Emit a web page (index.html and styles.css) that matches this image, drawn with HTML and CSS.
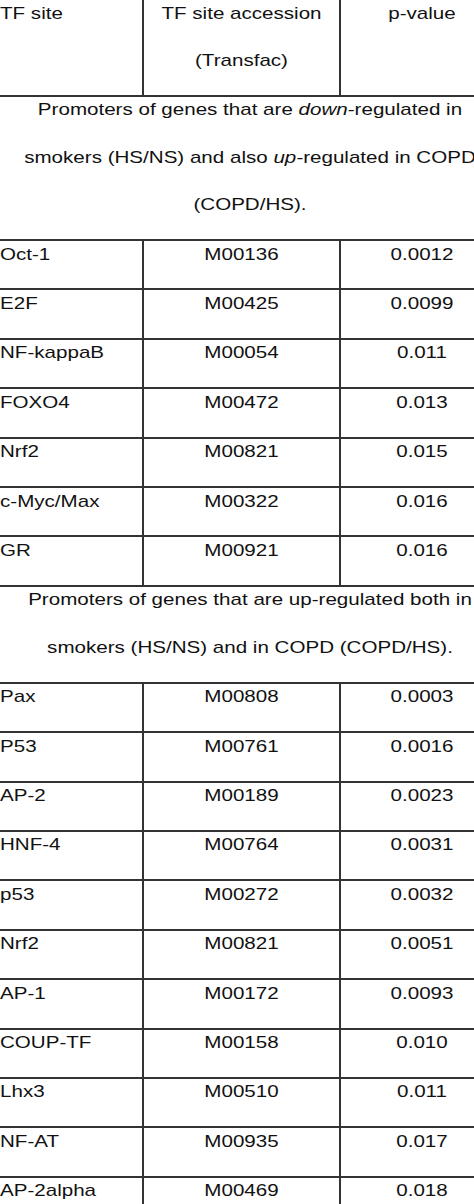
FILE: index.html
```html
<!DOCTYPE html>
<html>
<head>
<meta charset="utf-8">
<link rel="stylesheet" href="styles.css">
</head>
<body>
<div class="table">
  <div class="row">
    <div class="cell c1"><div class="t">TF site</div></div>
    <div class="cell c2"><div class="t">TF site accession<br>(Transfac)</div></div>
    <div class="cell c3"><div class="t">p-value</div></div>
  </div>
  <div class="row section">
    <div class="cell full"><div class="t">Promoters of genes that are <i>down</i>-regulated in<br>smokers (HS/NS) and also <i>up-</i>regulated in COPD<br>(COPD/HS).</div></div>
  </div>
  <div class="row"><div class="cell c1"><div class="t">Oct-1</div></div><div class="cell c2"><div class="t">M00136</div></div><div class="cell c3"><div class="t">0.0012</div></div></div>
  <div class="row"><div class="cell c1"><div class="t">E2F</div></div><div class="cell c2"><div class="t">M00425</div></div><div class="cell c3"><div class="t">0.0099</div></div></div>
  <div class="row"><div class="cell c1"><div class="t">NF-kappaB</div></div><div class="cell c2"><div class="t">M00054</div></div><div class="cell c3"><div class="t">0.011</div></div></div>
  <div class="row"><div class="cell c1"><div class="t">FOXO4</div></div><div class="cell c2"><div class="t">M00472</div></div><div class="cell c3"><div class="t">0.013</div></div></div>
  <div class="row"><div class="cell c1"><div class="t">Nrf2</div></div><div class="cell c2"><div class="t">M00821</div></div><div class="cell c3"><div class="t">0.015</div></div></div>
  <div class="row"><div class="cell c1"><div class="t">c-Myc/Max</div></div><div class="cell c2"><div class="t">M00322</div></div><div class="cell c3"><div class="t">0.016</div></div></div>
  <div class="row"><div class="cell c1"><div class="t">GR</div></div><div class="cell c2"><div class="t">M00921</div></div><div class="cell c3"><div class="t">0.016</div></div></div>
  <div class="row section">
    <div class="cell full"><div class="t">Promoters of genes that are up-regulated both in<br>smokers (HS/NS) and in COPD (COPD/HS).</div></div>
  </div>
  <div class="row"><div class="cell c1"><div class="t">Pax</div></div><div class="cell c2"><div class="t">M00808</div></div><div class="cell c3"><div class="t">0.0003</div></div></div>
  <div class="row"><div class="cell c1"><div class="t">P53</div></div><div class="cell c2"><div class="t">M00761</div></div><div class="cell c3"><div class="t">0.0016</div></div></div>
  <div class="row"><div class="cell c1"><div class="t">AP-2</div></div><div class="cell c2"><div class="t">M00189</div></div><div class="cell c3"><div class="t">0.0023</div></div></div>
  <div class="row"><div class="cell c1"><div class="t">HNF-4</div></div><div class="cell c2"><div class="t">M00764</div></div><div class="cell c3"><div class="t">0.0031</div></div></div>
  <div class="row"><div class="cell c1"><div class="t">p53</div></div><div class="cell c2"><div class="t">M00272</div></div><div class="cell c3"><div class="t">0.0032</div></div></div>
  <div class="row"><div class="cell c1"><div class="t">Nrf2</div></div><div class="cell c2"><div class="t">M00821</div></div><div class="cell c3"><div class="t">0.0051</div></div></div>
  <div class="row"><div class="cell c1"><div class="t">AP-1</div></div><div class="cell c2"><div class="t">M00172</div></div><div class="cell c3"><div class="t">0.0093</div></div></div>
  <div class="row"><div class="cell c1"><div class="t">COUP-TF</div></div><div class="cell c2"><div class="t">M00158</div></div><div class="cell c3"><div class="t">0.010</div></div></div>
  <div class="row"><div class="cell c1"><div class="t">Lhx3</div></div><div class="cell c2"><div class="t">M00510</div></div><div class="cell c3"><div class="t">0.011</div></div></div>
  <div class="row"><div class="cell c1"><div class="t">NF-AT</div></div><div class="cell c2"><div class="t">M00935</div></div><div class="cell c3"><div class="t">0.017</div></div></div>
  <div class="row"><div class="cell c1"><div class="t">AP-2alpha</div></div><div class="cell c2"><div class="t">M00469</div></div><div class="cell c3"><div class="t">0.018</div></div></div>
</div>
</body>
</html>
```
FILE: styles.css
```css
html, body {
  margin: 0;
  padding: 0;
  overflow: hidden;
  background: #ffffff;
}
body {
  font-family: "Liberation Sans", Arial, sans-serif;
  font-size: 17px;
  color: #111111;
}
.table {
  width: 506px;
  margin-left: -3px;
}
.row {
  display: grid;
  grid-template-columns: 147px 197px 1fr;
  border-bottom: 2px solid #333333;
}
.row.section {
  grid-template-columns: 1fr;
}
.cell {
  box-sizing: border-box;
  line-height: 47.4px;
}
.t {
  margin-top: -10.5px;
  margin-bottom: 10.5px;
  white-space: nowrap;
  transform: scaleX(1.21);
  transform-origin: center top;
}
.c1 {
  padding-left: 3px;
  border-right: 2px solid #333333;
}
.c1 .t {
  transform-origin: left top;
}
.c2 {
  text-align: center;
  border-right: 2px solid #333333;
}
.c3 {
  text-align: center;
}
.full {
  text-align: center;
}
```
